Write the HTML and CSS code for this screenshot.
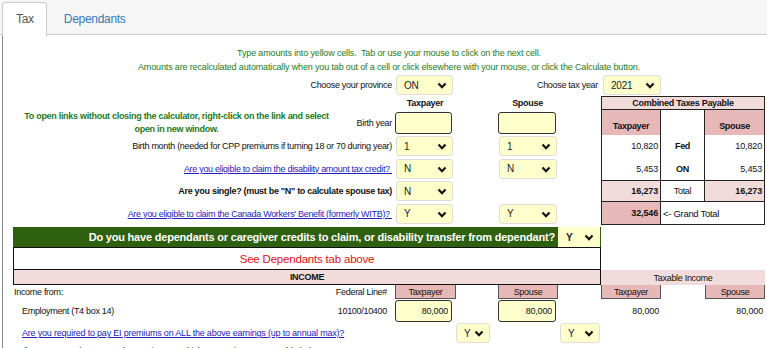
FILE: index.html
```html
<!DOCTYPE html>
<html lang="en">
<head>
    <meta charset="UTF-8">
    <meta name="viewport" content="width=device-width, initial-scale=1.0">
    <title>Canadian Income Tax Calculator</title>
    <link rel="stylesheet" href="styles.css">
</head>
<body>
    <ul class="tabs">
        <li class="tab active">Tax</li>
        <li class="tab"><a href="#">Dependants</a></li>
    </ul>

    <div class="panel">
        <p class="intro">Type amounts into yellow cells.&nbsp; Tab or use your mouse to click on the next cell.<br>Amounts are recalculated automatically when you tab out of a cell or click elsewhere with your mouse, or click the Calculate button.</p>

        <div class="calc">
            <!-- province / year -->
            <div class="a lbl">Choose your province</div>
            <div class="b"><span class="sel w57"><select><option>ON</option></select><svg class="chev" viewBox="0 0 10 7"><path d="M1.5 1.5 5 5.2 8.5 1.5"/></svg></span></div>
            <div class="ce lbl year">Choose tax year</div>
            <div class="f"><span class="sel w58"><select><option>2021</option></select><svg class="chev" viewBox="0 0 10 7"><path d="M1.5 1.5 5 5.2 8.5 1.5"/></svg></span></div>

            <!-- column heads -->
            <div class="b head">Taxpayer</div>
            <div class="d head">Spouse</div>
            <div class="fh ct-title">Combined Taxes Payable</div>

            <!-- birth year -->
            <div class="a lbl">
                <p class="note">To open links without closing the calculator, right-click on the link and select<br>open in new window.</p>
                Birth year
            </div>
            <div class="b"><input class="num" type="text"></div>
            <div class="d"><input class="num" type="text"></div>
            <div class="f ct pk2 who">Taxpayer</div>
            <div class="g ct"></div>
            <div class="h ct pk2 who">Spouse</div>

            <!-- birth month -->
            <div class="a lbl">Birth month (needed for CPP premiums if turning 18 or 70 during year)</div>
            <div class="b"><span class="sel w57"><select><option>1</option></select><svg class="chev" viewBox="0 0 10 7"><path d="M1.5 1.5 5 5.2 8.5 1.5"/></svg></span></div>
            <div class="d"><span class="sel w58"><select><option>1</option></select><svg class="chev" viewBox="0 0 10 7"><path d="M1.5 1.5 5 5.2 8.5 1.5"/></svg></span></div>
            <div class="f ct amt">10,820</div>
            <div class="g ct mid bold">Fed</div>
            <div class="h ct amt">10,820</div>

            <!-- disability -->
            <div class="a lbl"><a href="#">Are you eligible to claim the disability amount tax credit?&nbsp;</a></div>
            <div class="b"><span class="sel w57"><select><option>N</option></select><svg class="chev" viewBox="0 0 10 7"><path d="M1.5 1.5 5 5.2 8.5 1.5"/></svg></span></div>
            <div class="d"><span class="sel w58"><select><option>N</option></select><svg class="chev" viewBox="0 0 10 7"><path d="M1.5 1.5 5 5.2 8.5 1.5"/></svg></span></div>
            <div class="f ct amt">5,453</div>
            <div class="g ct mid bold">ON</div>
            <div class="h ct amt">5,453</div>

            <!-- single -->
            <div class="a lbl bold">Are you single? (must be "N" to calculate spouse tax)</div>
            <div class="b"><span class="sel w57"><select><option>N</option></select><svg class="chev" viewBox="0 0 10 7"><path d="M1.5 1.5 5 5.2 8.5 1.5"/></svg></span></div>
            <div class="f ct amt pk1 bold total">16,273</div>
            <div class="g ct mid total">Total</div>
            <div class="h ct amt pk1 bold total">16,273</div>

            <!-- cwb -->
            <div class="a lbl"><a href="#">Are you eligible to claim the Canada Workers' Benefit (formerly WITB)?&nbsp;</a></div>
            <div class="b"><span class="sel w57"><select><option>Y</option></select><svg class="chev" viewBox="0 0 10 7"><path d="M1.5 1.5 5 5.2 8.5 1.5"/></svg></span></div>
            <div class="d"><span class="sel w58"><select><option>Y</option></select><svg class="chev" viewBox="0 0 10 7"><path d="M1.5 1.5 5 5.2 8.5 1.5"/></svg></span></div>
            <div class="f ct amt pk2 bold grand">32,546</div>
            <div class="gh ct grand gt">&lt;- Grand Total</div>

            <!-- dependants -->
            <div class="ae bar">
                Do you have dependants or caregiver credits to claim, or disability transfer from dependant?
                <span class="sel w42 flat"><select><option>Y</option></select><svg class="chev" viewBox="0 0 10 7"><path d="M1.5 1.5 5 5.2 8.5 1.5"/></svg></span>
            </div>
            <div class="ae see">See Dependants tab above</div>

            <!-- income -->
            <div class="ae income">INCOME</div>
            <div class="fh taxable">Taxable Income</div>

            <div class="a split"><span>Income from:</span><span>Federal Line#</span></div>
            <div class="b colhead">Taxpayer</div>
            <div class="d colhead">Spouse</div>
            <div class="f colhead">Taxpayer</div>
            <div class="h colhead">Spouse</div>

            <div class="a split sub"><span>Employment (T4 box 14)</span><span>10100/10400</span></div>
            <div class="b"><input class="num" type="text" value="80,000"></div>
            <div class="d"><input class="num" type="text" value="80,000"></div>
            <div class="f amt">80,000</div>
            <div class="h amt">80,000</div>

            <div class="a sub ei"><a href="#">Are you required to pay EI premiums on ALL the above earnings (up to annual max)?</a></div>
            <div class="c"><span class="sel w34"><select><option>Y</option></select><svg class="chev" viewBox="0 0 10 7"><path d="M1.5 1.5 5 5.2 8.5 1.5"/></svg></span></div>
            <div class="e"><span class="sel w40"><select><option>Y</option></select><svg class="chev" viewBox="0 0 10 7"><path d="M1.5 1.5 5 5.2 8.5 1.5"/></svg></span></div>

            <div class="a sub last">If you answered "N", enter the earnings on which EI premiums are payable below.</div>
        </div>
    </div>
</body>
</html>
```

FILE: styles.css
```css
body {
    margin: 0;
    font-family: "Liberation Sans", Arial, sans-serif;
    font-size: 9px;
    letter-spacing: -0.3px;
    color: #111;
    background: #fff;
    overflow: hidden;
}

a {
    color: #2323b8;
}

/* tabs */
.tabs {
    list-style: none;
    margin: 0;
    padding: 2px 0 0 2px;
    height: 32px;
    display: flex;
    background: #f6f6f6;
    border-bottom: 1px solid #ccc;
    font-size: 12px;
}

.tab {
    height: 33px;
    line-height: 32px;
    padding: 0 12px 0 13px;
    margin-right: 3px;
    border: 1px solid transparent;
    border-bottom: none;
    border-radius: 3px 3px 0 0;
}

.tab.active {
    background: #fff;
    border-color: #ccc;
    color: #555;
}

.tab a {
    color: #337ab7;
    text-decoration: none;
}

/* content */
.panel {
    margin-left: 2px;
    border-left: 1px solid #888;
    padding: 0 2px 0 10px;
    height: 320px;
}

.intro {
    margin: 0;
    padding-top: 11px;
    line-height: 14px;
    letter-spacing: -0.15px;
    text-align: center;
    color: #1d7a1d;
}

.calc {
    display: grid;
    grid-template-columns: 381px 62px 41px 61px 43px 60px 44px 60px;
    grid-template-rows: 22px 14px 25px 22px 23px 22px 23px 22px 23px 15px 14px 23px 22px 16px;
}

.calc > div {
    display: flex;
    align-items: center;
    box-sizing: border-box;
    white-space: nowrap;
}

.a { grid-column: 1; }
.b { grid-column: 2; }
.c { grid-column: 3; }
.d { grid-column: 4; }
.e { grid-column: 5; }
.f { grid-column: 6; }
.g { grid-column: 7; }
.h { grid-column: 8; }
.ce { grid-column: 3 / 6; }
.ae { grid-column: 1 / 6; }
.fh { grid-column: 6 / 9; }
.gh { grid-column: 7 / 9; }

.bold {
    font-weight: bold;
}

.lbl {
    justify-content: flex-end;
    padding-right: 2px;
}

.year {
    padding-right: 3px;
}

.note {
    margin: 0 auto 0 0;
    width: 327px;
    white-space: normal;
    text-align: center;
    line-height: 12.5px;
    font-weight: bold;
    color: #1d7a1d;
}

.head {
    justify-content: center;
    font-weight: bold;
}

/* yellow inputs */
.sel {
    position: relative;
    display: inline-block;
    height: 20px;
    margin-left: 2px;
}

.sel select {
    -webkit-appearance: none;
    appearance: none;
    box-sizing: border-box;
    width: 100%;
    height: 100%;
    margin: 0;
    padding: 0 0 0 7px;
    border: 1px solid #ddd;
    border-radius: 3px;
    background: #ffffcc;
    font: inherit;
    font-size: 10px;
    letter-spacing: -0.2px;
    color: #222;
}

.sel.flat select {
    border-color: #ffffcc;
    border-radius: 0;
}

.chev {
    position: absolute;
    right: 6px;
    top: 7px;
    width: 10px;
    height: 7px;
    fill: none;
    stroke: #111;
    stroke-width: 2.2;
    pointer-events: none;
}

.w57 { width: 57px; }
.w58 { width: 58px; }
.w42 { width: 42px; margin-left: 3px; margin-right: 1px; }
.w40 { width: 40px; }
.w34 { width: 34px; margin-left: 0; }

.num {
    box-sizing: border-box;
    width: 57px;
    height: 22px;
    margin: 0 0 0 1px;
    padding: 0 3px;
    border: 1px solid #333;
    border-radius: 3px;
    background: #ffffcc;
    font: inherit;
    letter-spacing: -0.2px;
    color: #111;
    text-align: right;
}

.d .num {
    width: 58px;
}

/* combined taxes box */
.ct-title {
    justify-content: center;
    font-weight: bold;
    background: #f2dcdb;
    border: 1px solid #222;
}

.ct {
    border-right: 1px solid #222;
}

.ct.f {
    border-left: 1px solid #222;
}

.pk1 {
    background: #f2dcdb;
}

.pk2 {
    background: #e6b8b7;
}

.who {
    justify-content: center;
    align-items: flex-end !important;
    padding-bottom: 4px;
    font-weight: bold;
}

.amt {
    justify-content: flex-end;
    padding-right: 2px;
    letter-spacing: -0.15px;
}

.mid {
    justify-content: center;
}

.total {
    border-top: 1px solid #222;
    border-bottom: 1px solid #222;
}

.grand {
    border-bottom: 1px solid #222;
}

.gt {
    padding-left: 2px;
    font-size: 9.5px;
}

/* dependants bar */
.bar {
    justify-content: flex-end;
    margin-top: 2px;
    background: #2f6010;
    color: #fff;
    font-weight: bold;
    font-size: 11px;
    letter-spacing: -0.2px;
}

.see {
    justify-content: center;
    border: 1px solid #111;
    color: #dd1111;
    font-size: 11.5px;
    letter-spacing: -0.2px;
}

.income {
    justify-content: center;
    border: 1px solid #111;
    border-top: none;
    background: #f2dcdb;
    font-weight: bold;
}

.taxable {
    justify-content: center;
    background: #f2dcdb;
}

.split {
    justify-content: space-between;
    padding: 0 7px 0 1px;
}

.sub {
    padding-left: 9px;
}

.ei {
    letter-spacing: -0.2px;
}

.colhead {
    justify-content: center;
    background: #e6b8b7;
    border: 1px solid #555;
    border-top: none;
}

.b.colhead {
    margin-left: 1px;
}

.d.colhead {
    margin-left: 1px;
}

.last {
    align-items: flex-start !important;
    padding-top: 2px;
}
```
